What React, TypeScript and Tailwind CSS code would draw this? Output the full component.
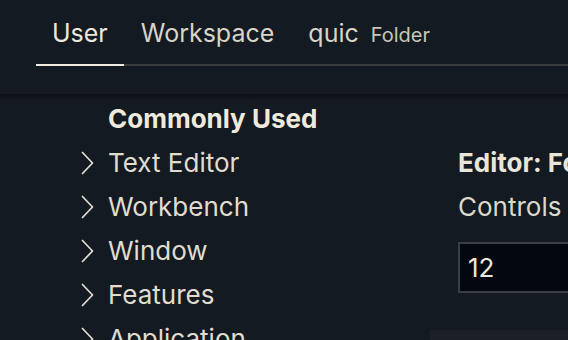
import React from "react";

const Chevron = () => (
  <svg width="14" height="24" viewBox="0 0 14 24" className="shrink-0">
    <path d="M2.5 1.5 L12.5 12 L2.5 22.5" fill="none" stroke="#e4e0d4" strokeWidth="1.7" strokeLinecap="round" strokeLinejoin="round" />
  </svg>
);

const tocItems = ["Text Editor", "Workbench", "Window", "Features", "Application"];

export default function App() {
  return (
    <div
      className="w-[568px] h-[340px] overflow-hidden bg-[#131a21] flex flex-col"
      style={{ fontFamily: "Inter, 'Noto Sans', sans-serif" }}
    >
      {/* Header with tabs */}
      <div className="h-[94px] shrink-0 pl-[36px] pt-[16px]">
        <div className="flex items-end">
          <div className="flex flex-col">
            <div className="px-[16px] h-[48px] text-[25px] leading-[34px] text-[#ebe7db]">User</div>
            <div className="h-[2px] bg-[#efebdf]" />
          </div>
          <div className="flex flex-col flex-1">
            <div className="flex items-start h-[48px]">
              <div className="px-[17px] text-[25px] leading-[34px] text-[#d8d4c8]">Workspace</div>
              <div className="pl-[17px] flex items-baseline">
                <span className="text-[25px] leading-[34px] text-[#d8d4c8]">quic</span>
                <span className="ml-[12px] text-[20px] leading-[34px] text-[#c9c5b9]">Folder</span>
              </div>
            </div>
            <div className="h-[2px] bg-[#3a3b3d]" />
          </div>
        </div>
      </div>

      {/* Body */}
      <div className="flex-1 flex relative">
        <div className="absolute left-0 right-0 top-0 h-[6px] bg-gradient-to-b from-[#0b1015] to-[#131a21]" />
        {/* TOC */}
        <div className="w-[430px] shrink-0 pt-[3px]">
          <div className="h-[44px] flex items-center pl-[108px] text-[26px] leading-[32px] font-bold text-[#efeadc]">
            Commonly Used
          </div>
          {tocItems.map((t) => (
            <div key={t} className="h-[44px] flex items-center pl-[80px] text-[26px] leading-[32px] text-[#e0dcd0]">
              <Chevron />
              <span className="ml-[14px]">{t}</span>
            </div>
          ))}
        </div>

        {/* Settings panel */}
        <div className="flex-1 flex flex-col pt-[47px] min-w-0">
          <div className="pl-[28px] h-[44px] flex items-center text-[26px] leading-[32px] font-bold text-[#e9e5d9] whitespace-nowrap">
            Editor: Font Size
          </div>
          <div className="pl-[28px] h-[44px] flex items-center text-[26px] leading-[32px] text-[#dcd8cc] whitespace-nowrap">
            Controls the font size in pixels.
          </div>
          <div className="ml-[28px] mt-[13px] h-[51px] border-2 border-[#3a3e48] bg-[#03070e] flex items-center pl-[8px] text-[26px] text-[#ebe7db] w-[300px] shrink-0">
            12
          </div>
          <div className="mt-[37px] flex-1 bg-[#1b2028]" />
        </div>
      </div>
    </div>
  );
}
